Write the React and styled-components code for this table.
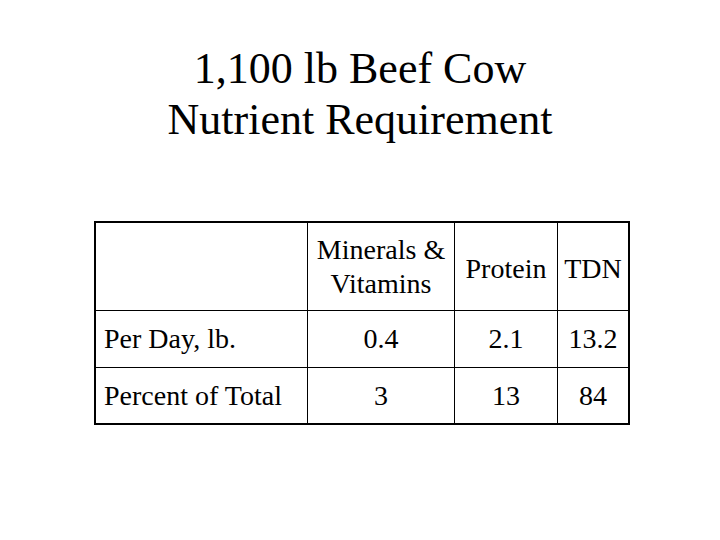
import styled, { createGlobalStyle } from "styled-components";

const GlobalStyle = createGlobalStyle`
  html, body {
    margin: 0;
    padding: 0;
    background: #ffffff;
  }
  body {
    font-family: "Liberation Serif", "Times New Roman", serif;
    color: #000000;
  }
`;

const Slide = styled.div`
  width: 720px;
  height: 540px;
  box-sizing: border-box;
  padding-top: 43px;
  background: #ffffff;
`;

const Title = styled.h1`
  margin: 0;
  font-weight: normal;
  font-size: 44px;
  line-height: 51px;
  text-align: center;
`;

const Table = styled.table`
  margin: 76px 0 0 94px;
  width: 536px;
  table-layout: fixed;
  border-collapse: separate;
  border-spacing: 0;
  border: 2px solid #000;
  font-size: 28px;
`;

const Row = styled.tr`
  height: ${(p) => p.$h}px;
`;

const Cell = styled.td`
  box-sizing: border-box;
  padding: ${(p) => (p.$label ? "0 0 0 8px" : p.$drop ? "5px 0 0" : "0")};
  text-align: ${(p) => (p.$label ? "left" : "center")};
  vertical-align: middle;
  border-right: ${(p) => (p.$last ? "none" : "1px solid #000")};
  border-bottom: ${(p) => (p.$bottom ? "none" : "1px solid #000")};
  white-space: nowrap;
  line-height: 34px;
`;

const rows = [
  { label: "Per Day, lb.", values: ["0.4", "2.1", "13.2"], h: 57 },
  { label: "Percent of Total", values: ["3", "13", "84"], h: 55 },
];

export default function App() {
  return (
    <Slide>
      <GlobalStyle />
      <Title>
        1,100 lb Beef Cow
        <br />
        Nutrient Requirement
      </Title>
      <Table>
        <colgroup>
          <col style={{ width: 212 }} />
          <col style={{ width: 147 }} />
          <col style={{ width: 103 }} />
          <col />
        </colgroup>
        <tbody>
          <Row $h={88}>
            <Cell $label />
            <Cell>
              Minerals &amp;
              <br />
              Vitamins
            </Cell>
            <Cell $drop>Protein</Cell>
            <Cell $drop $last>TDN</Cell>
          </Row>
          {rows.map((r, i) => (
            <Row key={r.label} $h={r.h}>
              <Cell $label $bottom={i === rows.length - 1}>
                {r.label}
              </Cell>
              {r.values.map((v, j) => (
                <Cell
                  key={j}
                  $last={j === r.values.length - 1}
                  $bottom={i === rows.length - 1}
                >
                  {v}
                </Cell>
              ))}
            </Row>
          ))}
        </tbody>
      </Table>
    </Slide>
  );
}
